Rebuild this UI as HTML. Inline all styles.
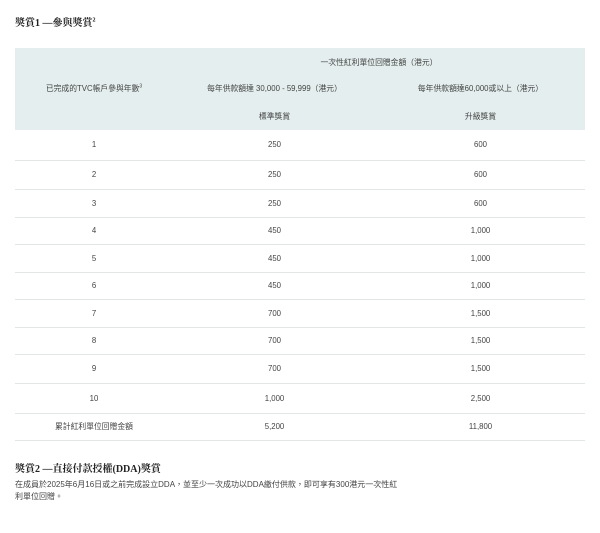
<!DOCTYPE html>
<html><head><meta charset="utf-8"><style>
body{margin:0;background:#fff;font-family:"Liberation Sans","Noto Sans CJK TC",sans-serif;color:#333;}
.h{position:absolute;left:15px;font-family:"Liberation Serif","Noto Serif CJK SC",serif;font-weight:bold;font-size:10px;color:#222;}
table{position:absolute;left:15px;top:48px;width:570px;border-collapse:collapse;font-size:7.8px;color:#444;}
td{text-align:center;padding:0;}
thead td{background:#e4eeee;}
tbody td{border-bottom:1px solid #e2e6e6;}
p{position:absolute;left:15px;top:479px;margin:0;font-size:8px;line-height:12px;color:#444;width:420px;white-space:nowrap;}
</style></head><body>
<div class="h" style="top:14px">獎賞1 —參與獎賞<sup style="font-size:6px">2</sup></div>
<table>
<colgroup><col style="width:158px"><col style="width:203px"><col style="width:209px"></colgroup>
<thead>
<tr style="height:26px"><td></td><td colspan="2" style="padding-top:2px">一次性紅利單位回贈金額（港元）</td></tr>
<tr style="height:28px"><td>已完成的TVC帳戶參與年數<sup style="font-size:5px">3</sup></td><td>每年供款額達 30,000 - 59,999（港元）</td><td>每年供款額達60,000或以上（港元）</td></tr>
<tr style="height:28px"><td></td><td>標準獎賞</td><td>升級獎賞</td></tr>
</thead>
<tbody>
<tr style="height:30px"><td>1</td><td>250</td><td>600</td></tr>
<tr style="height:29px"><td>2</td><td>250</td><td>600</td></tr>
<tr style="height:28px"><td>3</td><td>250</td><td>600</td></tr>
<tr style="height:27px"><td>4</td><td>450</td><td>1,000</td></tr>
<tr style="height:28px"><td>5</td><td>450</td><td>1,000</td></tr>
<tr style="height:27px"><td>6</td><td>450</td><td>1,000</td></tr>
<tr style="height:28px"><td>7</td><td>700</td><td>1,500</td></tr>
<tr style="height:27px"><td>8</td><td>700</td><td>1,500</td></tr>
<tr style="height:29px"><td>9</td><td>700</td><td>1,500</td></tr>
<tr style="height:30px"><td>10</td><td>1,000</td><td>2,500</td></tr>
<tr style="height:27px"><td>累計紅利單位回贈金額</td><td>5,200</td><td>11,800</td></tr>
</tbody></table>
<div class="h" style="top:460px">獎賞2 —直接付款授權(DDA)獎賞</div>
<p>在成員於2025年6月16日或之前完成設立DDA，並至少一次成功以DDA繳付供款，即可享有300港元一次性紅<br>利單位回贈。</p>
</body></html>
